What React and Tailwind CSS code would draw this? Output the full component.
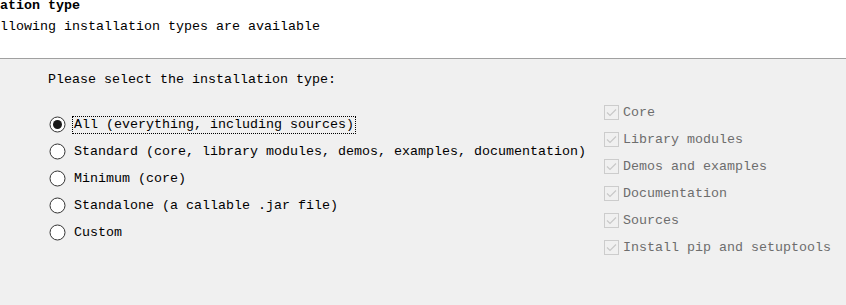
import React from "react";

const options = [
  "All (everything, including sources)",
  "Standard (core, library modules, demos, examples, documentation)",
  "Minimum (core)",
  "Standalone (a callable .jar file)",
  "Custom",
];

const components = [
  "Core",
  "Library modules",
  "Demos and examples",
  "Documentation",
  "Sources",
  "Install pip and setuptools",
];

const Radio = ({ checked }) => (
  <svg width="17" height="17" viewBox="0 0 17 17" className="shrink-0">
    <circle cx="8.5" cy="8.5" r="7.5" fill="#fff" stroke="#333" strokeWidth="1" />
    {checked && <circle cx="8.5" cy="8.5" r="4.5" fill="#1a1a1a" />}
  </svg>
);

const Check = () => (
  <svg width="15" height="15" viewBox="0 0 15 15" className="shrink-0">
    <rect x="0.5" y="0.5" width="14" height="14" fill="#f0f0f0" stroke="#cccccc" />
    <path d="M3 7.5 L6 10.5 L12 4.5" fill="none" stroke="#c8c8c8" strokeWidth="1.2" />
  </svg>
);

export default function App() {
  return (
    <div
      className="w-[846px] h-[305px] bg-[#f0f0f0] overflow-hidden text-black text-[13.333px] leading-[16px]"
      style={{ fontFamily: '"Liberation Mono", "DejaVu Sans Mono", monospace' }}
    >
      {/* header */}
      <div className="h-[59px] bg-white border-b border-[#a0a0a0] overflow-hidden">
        <div className="-ml-[56px] -mt-[2px] font-bold whitespace-nowrap">Installation type</div>
        <div className="-ml-[48px] mt-[5px] whitespace-nowrap">The following installation types are available</div>
      </div>

      {/* body */}
      <div className="flex">
        <div className="w-[604px] pl-[48px] pt-[13px]">
          <div className="whitespace-nowrap">Please select the installation type:</div>
          <div className="mt-[23px] flex flex-col">
            {options.map((o, i) => (
              <div key={o} className="h-[27px] flex items-center">
                <div className="ml-[1px] w-[17px] flex items-center">
                  <Radio checked={i === 0} />
                </div>
                <div
                  className={
                    "ml-[6px] px-[1px] whitespace-nowrap border border-dotted " +
                    (i === 0 ? "border-black" : "border-transparent")
                  }
                >
                  {o}
                </div>
              </div>
            ))}
          </div>
        </div>

        <div className="pt-[40px] flex flex-col">
          {components.map((c) => (
            <div key={c} className="h-[27px] flex items-center">
              <Check />
              <span className="ml-[4px] text-[#6d6d6d] whitespace-nowrap">{c}</span>
            </div>
          ))}
        </div>
      </div>
    </div>
  );
}
